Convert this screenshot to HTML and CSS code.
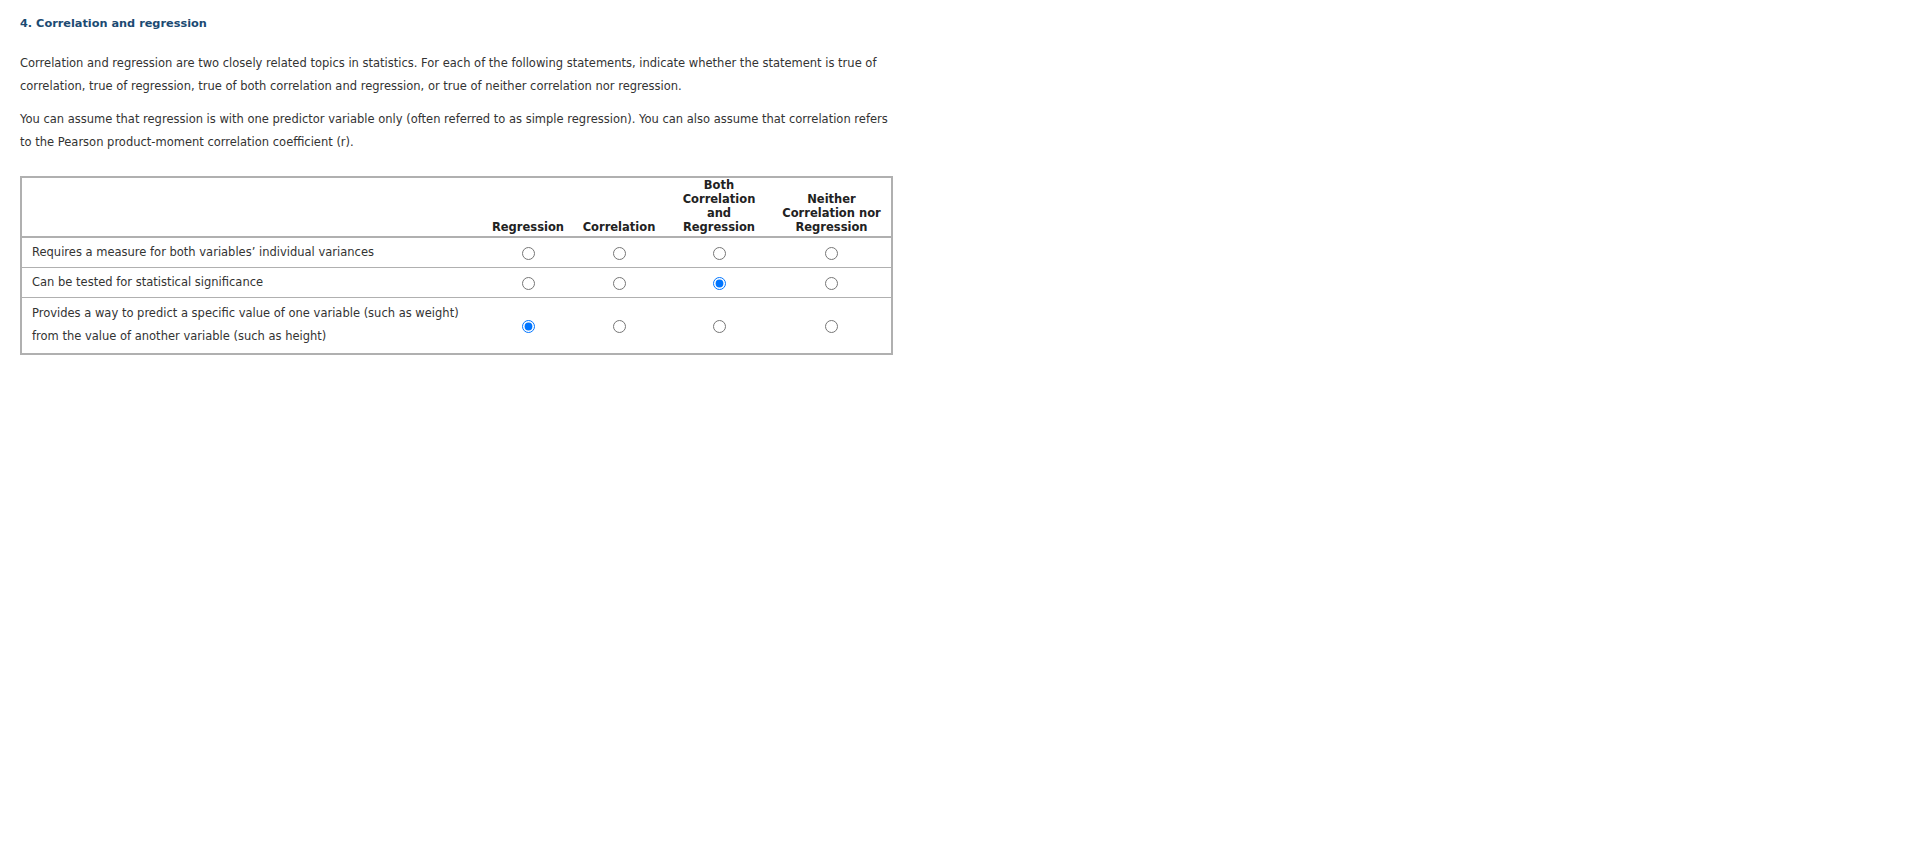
FILE: index.html
```html
<!DOCTYPE html>
<html>
<head>
<meta charset="utf-8">
<link rel="stylesheet" href="styles.css">
</head>
<body>
<div class="page">
  <h2 class="title">4. Correlation and regression</h2>
  <p class="para">Correlation and regression are two closely related topics in statistics. For each of the following statements, indicate whether the statement is true of correlation, true of regression, true of both correlation and regression, or true of neither correlation nor regression.</p>
  <p class="para">You can assume that regression is with one predictor variable only (often referred to as simple regression). You can also assume that correlation refers to the Pearson product-moment correlation coefficient (r).</p>
  <table class="grid">
    <colgroup>
      <col class="c-stmt">
      <col class="c-reg">
      <col class="c-cor">
      <col class="c-both">
      <col class="c-nei">
    </colgroup>
    <thead>
      <tr>
        <th class="blank"></th>
        <th>Regression</th>
        <th>Correlation</th>
        <th>Both<br>Correlation<br>and<br>Regression</th>
        <th>Neither<br>Correlation nor<br>Regression</th>
      </tr>
    </thead>
    <tbody>
      <tr>
        <td class="stmt">Requires a measure for both variables’ individual variances</td>
        <td class="opt"><input type="radio" name="q1"></td>
        <td class="opt"><input type="radio" name="q1"></td>
        <td class="opt"><input type="radio" name="q1"></td>
        <td class="opt"><input type="radio" name="q1"></td>
      </tr>
      <tr>
        <td class="stmt">Can be tested for statistical significance</td>
        <td class="opt"><input type="radio" name="q2"></td>
        <td class="opt"><input type="radio" name="q2"></td>
        <td class="opt"><input type="radio" name="q2" checked></td>
        <td class="opt"><input type="radio" name="q2"></td>
      </tr>
      <tr>
        <td class="stmt stmt-tall">Provides a way to predict a specific value of one variable (such as weight)<br>from the value of another variable (such as height)</td>
        <td class="opt"><input type="radio" name="q3" checked></td>
        <td class="opt"><input type="radio" name="q3"></td>
        <td class="opt"><input type="radio" name="q3"></td>
        <td class="opt"><input type="radio" name="q3"></td>
      </tr>
    </tbody>
  </table>
</div>
</body>
</html>
```

FILE: styles.css
```css
html, body {
  margin: 0;
  padding: 0;
  background: #ffffff;
}
.page {
  padding: 17px 20px;
  font-family: "DejaVu Sans", Verdana, sans-serif;
  font-size: 11.5px;
  color: #333333;
}
.title {
  margin: 0 0 21px 0;
  font-size: 11.3px;
  font-weight: bold;
  line-height: 14px;
  color: #1b4a72;
}
.para {
  margin: 0 0 10px 0;
  width: 880px;
  line-height: 23px;
  color: #333333;
}
.grid {
  margin-top: 22px;
  border-collapse: collapse;
  width: 871px;
  border: 2px solid #b0b0b0;
  table-layout: fixed;
}
.c-stmt { width: 463px; }
.c-reg { width: 88px; }
.c-cor { width: 94px; }
.c-both { width: 106px; }
.c-nei { width: 120px; }
.grid th {
  padding: 0 2px 2px 2px;
  vertical-align: bottom;
  text-align: center;
  font-weight: bold;
  line-height: 14px;
  color: #222222;
  border-bottom: 2px solid #b0b0b0;
}
.grid td {
  border-bottom: 1.5px solid #b0b0b0;
}
.stmt {
  padding: 3px 10px 3px 10px;
  line-height: 23px;
  color: #333333;
  text-align: left;
}
.stmt-tall {
  padding-top: 4px;
  padding-bottom: 5px;
}
.opt {
  text-align: center;
  vertical-align: middle;
}
.opt input {
  margin: 0;
  width: 13px;
  height: 13px;
  vertical-align: middle;
}
```
